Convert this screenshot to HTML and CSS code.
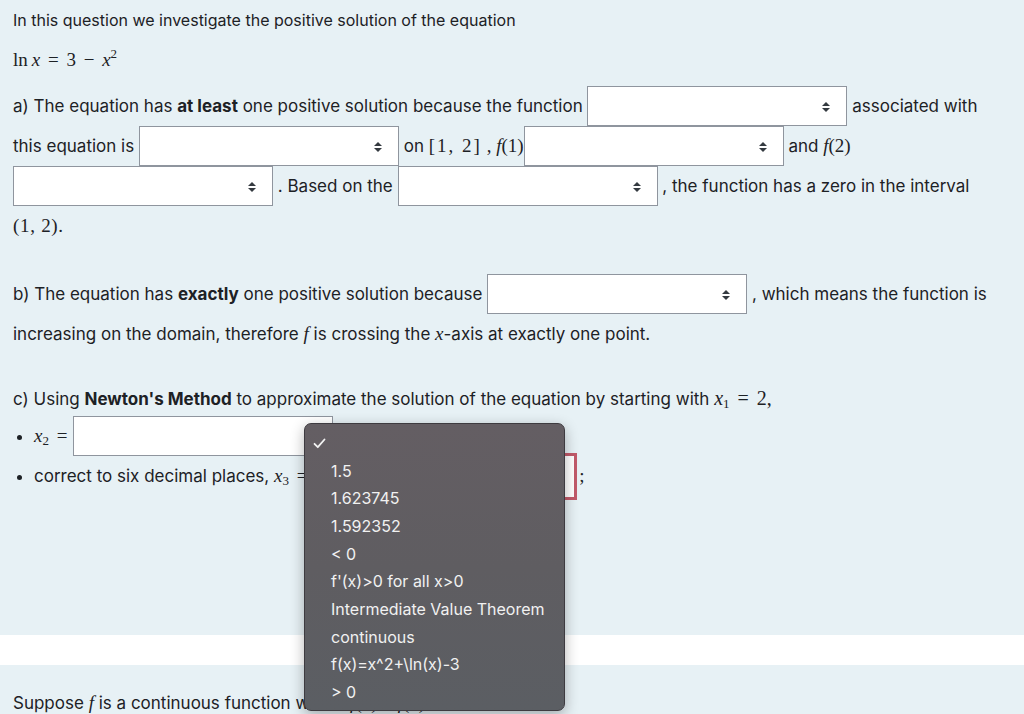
FILE: index.html
```html
<!DOCTYPE html>
<html>
<head>
<meta charset="utf-8">
<link rel="stylesheet" href="styles.css">
</head>
<body>
<div class="que">
  <p class="intro">In this question we investigate the positive solution of the equation</p>
  <p class="eq"><span class="m"><span class="up">ln</span><span class="thin"></span><i>x</i> <span class="op">=</span> 3 <span class="op">−</span> <i>x</i><sup>2</sup></span></p>
  <p class="para">a) The equation has <b>at least</b> one positive solution because the function <span class="sel"><span class="arr"></span></span> associated with this equation is <span class="sel"><span class="arr"></span></span> on <span class="m iv">[1, 2]</span> <span class="m">,</span> <span class="m"><i>f</i>(1)</span><span class="sel"><span class="arr"></span></span> and <span class="m"><i>f</i>(2)</span> <span class="sel"><span class="arr"></span></span> . Based on the <span class="sel"><span class="arr"></span></span> , the function has a zero in the interval <span class="m iv2">(1, 2).</span></p>
  <p class="para partb">b) The equation has <b>exactly</b> one positive solution because <span class="sel"><span class="arr"></span></span> , which means the function is increasing on the domain, therefore <span class="m"><i>f</i></span> is crossing the <span class="m"><i>x</i></span>-axis at exactly one point.</p>
  <p class="partc">c) Using <b>Newton's Method</b> to approximate the solution of the equation by starting with <span class="m wide"><i>x</i><sub>1</sub><span class="op">=</span>2,</span></p>
  <ul class="bul">
    <li class="b1"><span class="m"><i>x</i><sub>2</sub> <span class="op">=</span></span><span class="inp"></span></li>
    <li class="b2">correct to six decimal places, <span class="m"><i>x</i><sub>3</sub> <span class="op">=</span></span> <span class="inp err"></span><span class="m">;</span></li>
  </ul>
</div>
<div class="gap"></div>
<div class="que que2">
  <p class="intro2">Suppose <span class="m"><i>f</i></span> is a continuous function where <span class="m"><i>f</i>(1) &lt; <i>f</i>(2)</span>.</p>
</div>

<div class="menu">
  <div class="item chk"><svg width="13" height="11" viewBox="0 0 13 11"><path d="M1.5 5.8 L4.8 9.2 L11.5 1.5" fill="none" stroke="#f2f2f2" stroke-width="1.8" stroke-linecap="round" stroke-linejoin="round"/></svg></div>
  <div class="item">1.5</div>
  <div class="item">1.623745</div>
  <div class="item">1.592352</div>
  <div class="item">&lt; 0</div>
  <div class="item">f'(x)&gt;0 for all x&gt;0</div>
  <div class="item">Intermediate Value Theorem</div>
  <div class="item">continuous</div>
  <div class="item">f(x)=x^2+\ln(x)-3</div>
  <div class="item">&gt; 0</div>
</div>
</body>
</html>
```
FILE: styles.css
```css
html, body {
  margin: 0;
  padding: 0;
  background: #ffffff;
}
body {
  font-family: "Inter", "Noto Sans", sans-serif;
  font-size: 17px;
  color: #1d2125;
  position: relative;
  width: 1024px;
  height: 714px;
  overflow: hidden;
}
.que {
  background: #e7f1f5;
  padding: 0 24px 0 13px;
  height: 635px;
  box-sizing: border-box;
  overflow: hidden;
}
.gap {
  height: 30px;
  background: #ffffff;
}
.que2 {
  height: 49px;
  padding-top: 26px;
}
.intro2 { line-height: 24px; }
p { margin: 0; }
b { font-weight: 700; }
.intro { line-height: 40px; font-size: 16px; }
.eq { line-height: 40px; margin-bottom: 6px; }
.m {
  font-family: "Liberation Serif", "DejaVu Serif", serif;
  font-size: 19px;
  line-height: 1;
  white-space: nowrap;
}
.m i { font-style: italic; }
.m .up { font-style: normal; }
.m .thin { display: inline-block; width: 4px; }
.m .op { padding: 0 3px; }
.m.iv { letter-spacing: 2px; }
.m.iv2 { letter-spacing: 0.7px; }
.m.wide { font-size: 20px; }
.m.wide .op { padding: 0 8px; }
.m sup { font-size: 13px; vertical-align: 8px; line-height: 0; }
.m sub { font-size: 13px; vertical-align: -3px; line-height: 0; }
.para { line-height: 40px; }
.partb { margin-top: 28px; }
.partc { margin-top: 33px; line-height: 24px; }
.sel, .inp {
  display: inline-block;
  width: 260px;
  height: 40px;
  box-sizing: border-box;
  background: #ffffff;
  border: 1px solid #8f959e;
  vertical-align: top;
  position: relative;
}
.arr {
  position: absolute;
  right: 16px;
  top: 15px;
  width: 8px;
  height: 10px;
}
.arr::before, .arr::after {
  content: "";
  position: absolute;
  left: 0;
  border-left: 4px solid transparent;
  border-right: 4px solid transparent;
}
.arr::before { top: 0; border-bottom: 4px solid #343a40; }
.arr::after { bottom: 0; border-top: 4px solid #343a40; }
.bul {
  margin: 5px 0 0 0;
  padding: 0 0 0 21px;
}
.bul li { line-height: 40px; }
.b1 .inp { margin-left: 3px; }
.b2 { margin-top: -3px; line-height: 47px !important; }
.b2 .inp.err {
  width: 262px;
  height: 47px;
  border: 3px solid #c25a6a;
  margin-right: 2px;
}
.menu {
  position: absolute;
  left: 304px;
  top: 423px;
  width: 261px;
  height: 288px;
  box-sizing: border-box;
  border-radius: 7px;
  border: 1px solid #3e3b40;
  background: linear-gradient(180deg, #645e63 0%, #5f5d61 50%, #5b5e63 100%);
  box-shadow: 0 4px 14px rgba(0,0,0,0.3);
  padding-top: 6px;
  font-family: "Inter", "Noto Sans", sans-serif;
  font-size: 16px;
  color: #f1f1f1;
}
.item {
  height: 27.67px;
  line-height: 27.67px;
  padding-left: 26px;
  white-space: nowrap;
}
.item.chk { padding-left: 8px; display: flex; align-items: center; }
```
